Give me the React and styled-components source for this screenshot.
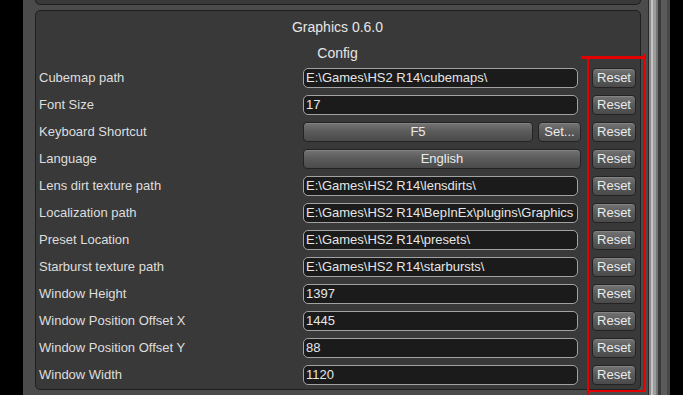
import React from "react";
import styled, { createGlobalStyle } from "styled-components";

const Global = createGlobalStyle`
  html, body { margin: 0; padding: 0; background: #000; }
  body { font-family: "Liberation Sans", Arial, sans-serif; }
`;

const Screen = styled.div`
  position: relative;
  width: 683px;
  height: 395px;
  overflow: hidden;
  display: flex;
  background: #000;
`;

const Gutter = styled.div`
  width: ${(p) => p.$w}px;
  flex: none;
  background: #000;
`;

const Panel = styled.div`
  width: 625px;
  flex: none;
  background: #4b4b4b;
  padding: 0 7px 0 12px;
  box-sizing: border-box;
  display: flex;
  flex-direction: column;
`;

const PrevBox = styled.div`
  height: 5px;
  box-sizing: border-box;
  background: #393939;
  border: 1px solid #1f1f1f;
  border-top: none;
  border-radius: 0 0 5px 5px;
  margin-bottom: 5px;
`;

const Box = styled.div`
  background: #393939;
  border: 1px solid #1f1f1f;
  border-radius: 5px;
  padding: 7px 4px 4px 3px;
  display: flex;
  flex-direction: column;
  color: #e2e2e2;
  font-size: 13px;
`;

const Heading = styled.div`
  height: 18px;
  line-height: 18px;
  font-size: 14px;
  text-align: center;
  color: #e6e6e6;
  margin-bottom: ${(p) => p.$mb}px;
`;

const Rows = styled.div`
  display: flex;
  flex-direction: column;
  gap: 7px;
`;

const Row = styled.div`
  display: flex;
  align-items: center;
  height: 20px;
`;

const Label = styled.div`
  width: 264px;
  flex: none;
  white-space: nowrap;
  line-height: 20px;
  color: #dedede;
`;

const FieldCell = styled.div`
  width: 278px;
  flex: none;
  display: flex;
  gap: 5px;
  height: 20px;
`;

const TextInput = styled.div`
  width: 275px;
  height: 20px;
  box-sizing: border-box;
  background: #1b1b1b;
  border: 1px solid #a2a2a2;
  border-radius: 5px;
  padding: 0 0 0 2px;
  line-height: 18px;
  color: #e6e6e6;
  white-space: nowrap;
  overflow: hidden;
`;

const Button = styled.div`
  flex: ${(p) => (p.$grow ? "1 1 auto" : "none")};
  width: ${(p) => (p.$w ? `${p.$w}px` : "auto")};
  height: 20px;
  box-sizing: border-box;
  border: 1px solid #232323;
  border-radius: 4px;
  background: linear-gradient(#747474, #5c5c5c 45%, #4a4a4a);
  box-shadow: inset 0 1px 0 rgba(255, 255, 255, 0.12);
  color: #ebebeb;
  text-align: center;
  line-height: 18px;
  white-space: nowrap;
  overflow: hidden;
`;

const ResetButton = styled(Button)`
  margin-left: 11px;
`;

const Scrollbar = styled.div`
  width: 22px;
  flex: none;
  background: linear-gradient(
    to right,
    #2a2a2a 0px,
    #2a2a2a 1px,
    #8a8a8a 1px,
    #8a8a8a 3px,
    #c4c4c4 3px,
    #c4c4c4 5px,
    #9c9c9c 5px,
    #9c9c9c 8px,
    #767676 8px,
    #767676 10px,
    #3a3a3a 10px,
    #3a3a3a 13px,
    #5a5a5a 13px,
    #5a5a5a 19px,
    #474747 19px
  );
`;

const Annotation = styled.svg`
  position: absolute;
  left: 0;
  top: 0;
  pointer-events: none;
`;

const rows = [
  { label: "Cubemap path", value: "E:\\Games\\HS2 R14\\cubemaps\\" },
  { label: "Font Size", value: "17" },
  { label: "Keyboard Shortcut", type: "key", value: "F5" },
  { label: "Language", type: "button", value: "English" },
  { label: "Lens dirt texture path", value: "E:\\Games\\HS2 R14\\lensdirts\\" },
  { label: "Localization path", value: "E:\\Games\\HS2 R14\\BepInEx\\plugins\\Graphics" },
  { label: "Preset Location", value: "E:\\Games\\HS2 R14\\presets\\" },
  { label: "Starburst texture path", value: "E:\\Games\\HS2 R14\\starbursts\\" },
  { label: "Window Height", value: "1397" },
  { label: "Window Position Offset X", value: "1445" },
  { label: "Window Position Offset Y", value: "88" },
  { label: "Window Width", value: "1120" },
];

function Field({ row }) {
  if (row.type === "key") {
    return (
      <FieldCell>
        <Button $grow>{row.value}</Button>
        <Button $w={43}>Set...</Button>
      </FieldCell>
    );
  }
  if (row.type === "button") {
    return (
      <FieldCell>
        <Button $grow>{row.value}</Button>
      </FieldCell>
    );
  }
  return (
    <FieldCell>
      <TextInput>{row.value}</TextInput>
    </FieldCell>
  );
}

export default function App() {
  return (
    <>
      <Global />
      <Screen>
        <Gutter $w={23} />
        <Panel>
          <PrevBox />
          <Box>
            <Heading $mb={8}>Graphics 0.6.0</Heading>
            <Heading $mb={6}>Config</Heading>
            <Rows>
              {rows.map((r) => (
                <Row key={r.label}>
                  <Label>{r.label}</Label>
                  <Field row={r} />
                  <ResetButton $w={44}>Reset</ResetButton>
                </Row>
              ))}
            </Rows>
          </Box>
        </Panel>
        <Scrollbar />
        <Gutter $w={13} />
        <Annotation width="683" height="395" viewBox="0 0 683 395">
          <rect x="581" y="56" width="65" height="3" fill="#e30000" />
          <rect x="587" y="56" width="2" height="339" fill="#e30000" />
          <rect x="643" y="54" width="2" height="338" fill="#e30000" />
          <rect x="587" y="390" width="58" height="2" fill="#e30000" />
        </Annotation>
      </Screen>
    </>
  );
}
